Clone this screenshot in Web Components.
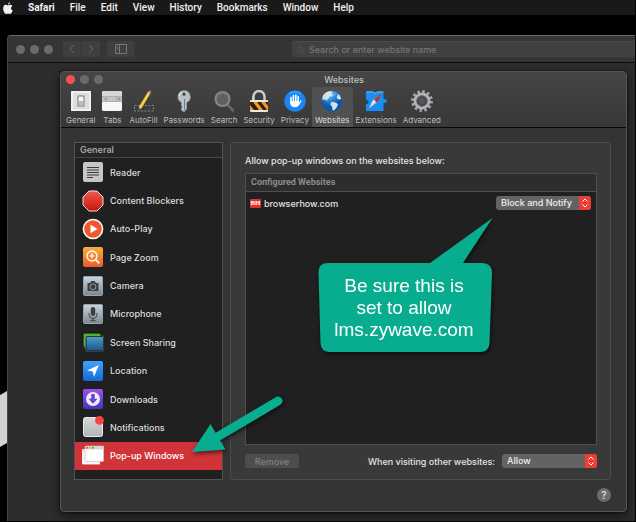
<!DOCTYPE html>
<html lang="en">
<head>
<meta charset="utf-8">
<title>Websites</title>
<style>
  html, body { margin: 0; height: 100%; }
  body { background: #000; font-family: Inter, "Liberation Sans", sans-serif; font-size: 9px; color: #e4e4e4; overflow: hidden; }
</style>
</head>
<body>
<mac-desktop>
  <mac-menubar slot="menubar"></mac-menubar>
  <browser-window>
    <settings-dialog></settings-dialog>
  </browser-window>
  <pointer-arrow slot="overlay"></pointer-arrow>
  <callout-note slot="overlay">Be sure this is<br>set to allow<br>lms.zywave.com</callout-note>
</mac-desktop>

<script>
const ICONS = {
  general: `<rect x="1" y="1" width="20" height="20" fill="#f0f0f0"/><rect x="3" y="3" width="16" height="16" fill="#dcdfe2"/><rect x="8" y="6" width="6" height="10" fill="#f5f5f5" stroke="#70757b"/><rect x="9" y="11" width="4" height="4" fill="#b9bdc2"/>`,
  tabs: `<rect x="1" y="1" width="20" height="20" rx="1.5" fill="#f7f7f7"/><path d="M1 2.5Q1 1 2.500 1h17Q21 1 21 2.500V6H1z" fill="#dad5d8"/><rect x="1" y="6" width="20" height="6" fill="#c6c1c4"/><path d="M1 6.500h20M1 11.500h20M15.500 6v6" stroke="#a5a1a7" stroke-width=".6"/><path d="M3.500 7.700l2.500 2.500m0-2.500l-2.500 2.500M16.700 9h3M18.200 7.500v3" stroke="#7b787c" stroke-width=".7"/>`,
  autofill: `<rect x="1.500" y="15.500" width="19" height="5.500" fill="none" stroke="#9a9a9a" stroke-width=".8" stroke-dasharray="2 1.500"/><path d="M14.500 2.500l2.600 1.500L9 17.500l-3 2 .4-3.500z" fill="#f6c12c"/><path d="M15.700 3.200L7.500 17" stroke="#ffe37a" stroke-width=".8"/><path d="M17.100 4l-2.600-1.500.8-1.200 2.500 1.500z" fill="#b9bcc2"/><path d="M15.300 1.300q.8-1.300 2.100-.7 1.200.8.400 2.200z" fill="#ee5d8f"/><path d="M6.400 16L9 17.500l-3 2z" fill="#e2c59a"/><path d="M6.200 18.200l1 .6-1.300.8z" fill="#222"/>`,
  passwords: `<path fill="#b9c2c8" stroke="#8e989f" stroke-width=".5" fill-rule="evenodd" d="M11 .5a6.300 6.300 0 0 1 2.700 12V19L11 22l-2.600-2v-2l1-1-1-1v-3.600A6.300 6.300 0 0 1 11 .5zm0 2a1.700 1.700 0 1 0 0 3.400 1.700 1.700 0 0 0 0-3.400z"/><path d="M11.500 9v11" stroke="#707b83"/><path d="M6 6a5 5 0 0 1 3-4" stroke="#e6edf0" fill="none"/>`,
  search: `<path d="M14 14l6 6.500" stroke="#666" stroke-width="2.600" stroke-linecap="round"/><circle cx="9.500" cy="9" r="7" fill="#5f5f5f" stroke="#858585" stroke-width="2.200"/><path d="M5 8a5 5 0 0 1 8-3" stroke="#777" fill="none"/>`,
  security: `<path d="M5.500 11V6.500a5.500 5.500 0 0 1 11 0V11" fill="none" stroke="#c9cdd0" stroke-width="2.400"/><path d="M5 10V6.500" stroke="#f4f4f4" stroke-width=".8"/><rect x="2" y="10" width="18" height="12" rx="1" fill="#e7e7e7"/><rect x="2" y="12" width="18" height="8" fill="#f39b20"/><path d="M2 12h3l6 8H6L2 15zM9 12h4l6 8h-4zM17 12h3v4z" fill="#2c2018"/>`,
  privacy: `<circle cx="11" cy="11" r="10.700" fill="#1887f4"/><path d="M5 4a9.500 9.500 0 0 1 12 0" stroke="#4db0ff" fill="none"/><path d="M7 7.500v5M9.400 5.500v8M11.800 5v8M14.200 6.500v8" stroke="#fff" stroke-width="1.600" stroke-linecap="round"/><path d="M6.200 11H15v1.500l1.600-2.200q1.200-.4.900.8L15.200 15q-1.500 2.300-4.200 2.300-4 0-4.800-3.800z" fill="#fff"/>`,
  websites: `<defs><radialGradient id="g" cx=".4" cy=".25"><stop stop-color="#55b4f6"/><stop offset="1" stop-color="#0d58aa"/></radialGradient></defs><circle cx="11" cy="11" r="10.500" fill="url(#g)"/><path d="M2 5.500Q5 1.500 9 1.200l2.500.8-1 1.500 1.500 1-1.500 2-2-.3-.5 2-2 1.200.5 1.500-2-1.200-2-.5L2 10.500 1.200 9zM10.500 12l3.500.3 3 1.700-1 3-3 3.500-1.500-.5-.5-3.500-1.800-2zM16 3.500l2.500 1.500 1.700 3.200-1.500 1.500-2.300-.7-.8-2.200 1.200-1.600z" fill="#d0e1e8"/><ellipse cx="10" cy="4" rx="6" ry="3" fill="#fff" opacity=".2"/>`,
  extensions: `<path fill="#198ff3" d="M1 1.500h7.500a2 2 0 0 0 3.500 0H18.500V9h.8a2 2 0 0 1 2.500 2 2 2 0 0 1-2.500 2h-.8v8H1v-7a2.200 2.200 0 0 0 2.700-2A2.200 2.200 0 0 0 1 10z"/><path d="M1.500 2h7a2 2 0 0 0 3.700 0h6" fill="none" stroke="#62bdff"/><path d="M16.500 3.500L8.500 9.500l3 3z" fill="#f0422f"/><path d="M16.500 3.500L11.500 12.500 10 11z" fill="#b72626"/><path d="M4 18L8.500 9.500l3 3z" fill="#f4f6f8"/><path d="M4 18L10 11l1.500 1.500z" fill="#bbc9d4"/>`,
  advanced: `<circle cx="11" cy="11" r="9.400" fill="none" stroke="#a7a9ab" stroke-width="3" stroke-dasharray="2.460 2.460"/><circle cx="11" cy="11" r="6.900" fill="none" stroke="#b2b4b6" stroke-width="3"/><circle cx="11" cy="11" r="5.400" fill="#45474a" stroke="#777" stroke-width=".8"/><circle cx="11" cy="11" r="3" fill="#55585b"/>`,
  reader: `<rect x="1" y="1" width="20" height="20" rx="2" fill="#c6c6c8"/><path d="M5 6.500h12M5 9h12M5 11.500h12M5 14h12M5 16.500h6" stroke="#3a3a3c" stroke-width="1.200"/>`,
  blockers: `<defs><linearGradient id="g" x2="0" y2="1"><stop stop-color="#f25a4a"/><stop offset="1" stop-color="#c4160f"/></linearGradient></defs><path d="M7 1h8l6 6v8l-6 6H7l-6-6V7z" fill="url(#g)" stroke="#e9dedd" stroke-width="1"/>`,
  play: `<circle cx="11" cy="11" r="9.600" fill="#f0592f" stroke="#fff" stroke-width="1.500"/><path d="M8.500 6.800v8.400L15.600 11z" fill="#fff"/>`,
  zoom: `<defs><linearGradient id="g" x2="0" y2="1"><stop stop-color="#f7b13a"/><stop offset="1" stop-color="#ee5a2f"/></linearGradient></defs><rect x="1" y="1" width="20" height="20" rx="2" fill="url(#g)"/><circle cx="10" cy="10" r="5" fill="none" stroke="#fff" stroke-width="1.300"/><path d="M7.500 10h5M10 7.500v5" stroke="#fff" stroke-width="1.200"/><path d="M13.700 13.700l3.600 3.600" stroke="#fff" stroke-width="1.800"/>`,
  camera: `<defs><linearGradient id="g" x2="0" y2="1"><stop stop-color="#c8d6dd"/><stop offset="1" stop-color="#7f878b"/></linearGradient></defs><rect x="1.500" y="1.500" width="19" height="19" rx="1" fill="url(#g)" stroke="#8fa4b6"/><path d="M5.500 8h2.700l1-2h3.600l1 2h2.700v8h-11z" fill="#3c4043"/><circle cx="11" cy="11.800" r="2.900" fill="#353a3d" stroke="#a9b0b4" stroke-width=".8"/>`,
  microphone: `<defs><linearGradient id="g" x2="0" y2="1"><stop stop-color="#c8d6dd"/><stop offset="1" stop-color="#7f878b"/></linearGradient></defs><rect x="1.500" y="1.500" width="19" height="19" rx="1" fill="url(#g)" stroke="#8fa4b6"/><rect x="8.800" y="4" width="4.400" height="9" rx="2.200" fill="#3c4043"/><path d="M7 10v1.500a4 4 0 0 0 8 0V10M11 15.500V18M8.500 17.700h5" stroke="#3c4043" fill="none"/>`,
  sharing: `<defs><linearGradient id="g" x2="0" y2="1"><stop stop-color="#48a4bb"/><stop offset="1" stop-color="#1c5298"/></linearGradient></defs><rect x="1" y="2" width="18" height="14" rx="1" fill="#4fae2c" stroke="#111"/><path d="M1.500 16.300h17" stroke="#888" stroke-width=".6"/><rect x="4" y="5.500" width="17.500" height="14" rx="1" fill="url(#g)" stroke="#101418"/><rect x="3.500" y="5" width="18.500" height="15" rx="1.500" fill="none" stroke="#8b9298" stroke-width=".5"/>`,
  location: `<defs><linearGradient id="g" x2="0" y2="1"><stop stop-color="#3fa4fa"/><stop offset="1" stop-color="#1467de"/></linearGradient></defs><rect x="1" y="1" width="20" height="20" rx="2" fill="url(#g)"/><path d="M16.800 5L12 17l-1.300-5.500L5 10.500z" fill="#fff"/>`,
  downloads: `<defs><linearGradient id="g" x2="0" y2="1"><stop stop-color="#a24df0"/><stop offset="1" stop-color="#3f36b9"/></linearGradient></defs><rect x="1" y="1" width="20" height="20" rx="2" fill="url(#g)"/><circle cx="11" cy="11" r="7" fill="#efeaf9"/><path d="M9.300 6h3.400v4.800h2.800L11 15.800l-4.500-5h2.800z" fill="#6540cb"/>`,
  notifications: `<defs><linearGradient id="g" x2="0" y2="1"><stop stop-color="#d5d7da"/><stop offset="1" stop-color="#b1b3b6"/></linearGradient></defs><rect x="1.500" y="1.500" width="19" height="19" rx="2" fill="url(#g)" stroke="#e9e9ea"/><circle cx="17.500" cy="4.400" r="4.400" fill="#f24540"/>`,
  popup: `<rect x="0" y="4" width="18" height="15.500" rx="1" fill="#e8e2e2"/><rect x=".5" y="6.500" width="17" height="12.500" fill="#f7f7f7"/><rect x="3" y="1" width="18.700" height="15.500" rx="1" fill="#fff" stroke="#c7b5b5" stroke-width=".6"/><rect x="3" y="1" width="18.700" height="3.500" rx="1" fill="#d9d4d4"/><circle cx="5" cy="2.800" r="1" fill="#ef5148"/><circle cx="8" cy="2.800" r="1" fill="#e9a52e"/><circle cx="11" cy="2.800" r="1" fill="#43a541"/>`
};
const icon = (name, size = 22) => `<svg width="${size}" height="${size}" viewBox="0 0 22 22" aria-hidden="true">${ICONS[name]}</svg>`;

const RESET = `
  *, ::before, ::after { box-sizing: border-box; }
  button, select, input { font: inherit; color: inherit; border: 0; padding: 0; margin: 0; background: none; appearance: none; white-space: nowrap; }
  svg { display: block; flex: none; }
`;
function define(tag, css, html) {
  customElements.define(tag, class extends HTMLElement {
    connectedCallback() {
      if (this.shadowRoot) return;
      const body = typeof html === "function" ? html(this) : html;
      this.attachShadow({ mode: "open" }).innerHTML = `<style>${RESET}${css}</style>${body}`;
    }
  });
}

define("mac-desktop", `
  :host { display: flex; flex-direction: column; position: relative; min-height: 100vh; padding: 0 1px 1px 0; box-sizing: border-box; overflow: hidden; }
  main { flex: 1; display: flex; margin-top: 20px; }
  .edge { flex: none; width: 7px; display: flex; flex-direction: column; justify-content: flex-end; padding-bottom: 72px; }
`, `<slot name="menubar"></slot>
<main><div class="edge"><svg width="7" height="58" viewBox="0 0 7 58"><path d="M0 4L7 0V52L0 56z" fill="#d2d2d2"/></svg></div><slot></slot></main>
<slot name="overlay"></slot>`);

define("mac-menubar", `
  :host { display: block; background: #191919; color: #f0f0f0; font: 500 10px Roboto, sans-serif; }
  nav { display: flex; align-items: center; gap: 15px; height: 15px; padding-left: 3px; }
  .app { font-weight: 700; }
`, `<nav aria-label="Menu bar">
  <button aria-label="Apple"><svg width="10" height="12" viewBox="0 0 10 12"><path fill="#f2f2f2" d="M7 0Q7 2 5 2.700 4.800 1 7 0zM5 3.400Q6 2.800 7 2.800q1.600 0 2.400 1.200Q8 5 8 6.300q0 1.500 1.700 2.300Q8.500 12 7 12q-.9-.5-1.900-.5T3.200 12Q1.500 12 .6 9-.7 4.500 1.600 3.100 2.700 2.500 3.900 3z"/></svg></button>
  <button class="app">Safari</button><button>File</button><button>Edit</button><button>View</button><button>History</button><button>Bookmarks</button><button>Window</button><button>Help</button>
</nav>`);

define("traffic-lights", `
  :host { display: flex; gap: 5px; }
  button { width: 9px; height: 9px; border-radius: 50%; background: #6b6b6b; }
  button:first-of-type { background: var(--close, #6b6b6b); }
`, `<button aria-label="Close"></button><button aria-label="Minimize"></button><button aria-label="Zoom"></button>`);

define("browser-window", `
  :host { flex: 1; min-width: 0; display: flex; flex-direction: column; background: #2d2d2d; border: 1px solid #484848; border-top-color: #686868; border-right: 0; border-bottom: 0; border-top-left-radius: 4px; }
  header { display: grid; grid-template-columns: 284px 1fr; align-items: center; height: 27px; background: #353535; border-bottom: 1px solid #0c0c0c; border-top-left-radius: 4px; }
  .controls { display: flex; align-items: center; padding-left: 8px; }
  .controls button { display: grid; place-items: center; height: 16px; width: 18px; margin-right: 1px; background: #3f3f3f; border-radius: 3px; }
  .controls button:first-of-type { margin-left: 10px; }
  .controls button.side { width: 27px; margin-left: 6px; }
  label { display: flex; align-items: center; gap: 4px; height: 16px; padding-left: 5px; background: #414141; border-radius: 3px 0 0 3px; border-top: 1px solid #4b4b4b; }
  input { flex: 1; min-width: 0; }
  input::placeholder { color: #7b7b7b; opacity: 1; }
  .content { flex: 1; display: flex; padding: 8px 8px 9px 52px; }
`, `<header>
  <div class="controls"><traffic-lights></traffic-lights>
    <button aria-label="Back"><svg width="8" height="10"><path d="M6 1L2 5l4 4" fill="none" stroke="#666"/></svg></button>
    <button aria-label="Forward"><svg width="8" height="10"><path d="M2 1l4 4-4 4" fill="none" stroke="#666"/></svg></button>
    <button class="side" aria-label="Sidebar"><svg width="12" height="10"><path d="M.5.500h11v9H.500zM4.500.500v9M1.500 3h2M1.500 5h2" fill="none" stroke="#777"/></svg></button>
  </div>
  <label><svg width="8" height="8"><circle cx="3.500" cy="3.500" r="2.500" fill="none" stroke="#525252"/><path d="M5.500 5.500l2 2" stroke="#525252"/></svg><input type="search" placeholder="Search or enter website name" aria-label="Address"></label>
</header>
<div class="content"><slot></slot></div>`);

define("toolbar-item", `
  :host { display: block; }
  button { display: flex; flex-direction: column; align-items: center; gap: 2px; height: 40px; padding: 3px 3px 0; font-size: 8px; line-height: 12px; color: #bebebe; border-radius: 3px 3px 0 0; }
  :host([selected]) button { background: #515151; color: #dcdcdc; }
`, el => `<button ${el.hasAttribute("selected") ? 'aria-current="page"' : ""}>${icon(el.getAttribute("icon"))}<slot></slot></button>`);

define("sidebar-item", `
  :host { display: flex; }
  button { flex: 1; display: flex; align-items: center; gap: 6px; padding-left: 7px; font-weight: 500; color: #dcdcdc; text-align: left; }
  :host([selected]) button { background: #d03338; color: #fff; }
`, el => `<button>${icon(el.getAttribute("icon"))}<slot></slot></button>`);

define("popup-select", `
  :host { display: grid; width: 95px; height: 14px; background: #636363; border-radius: 3px; overflow: hidden; font-weight: 500; color: #f0f0f0; }
  select, svg { grid-area: 1 / 1; }
  select { width: 100%; padding: 0 13px 0 5px; line-height: 14px; outline: 0; }
  svg { justify-self: end; pointer-events: none; }
`, el => `<select aria-label="${el.getAttribute("label")}">${el.getAttribute("options").split("|").map(o => `<option>${o}</option>`).join("")}</select>
<svg width="12" height="14"><rect width="12" height="14" fill="#ee3f35"/><path d="M3.500 5.500L6 3l2.500 2.500M3.500 8.500L6 11l2.500-2.500" fill="none" stroke="#fff"/></svg>`);

define("settings-dialog", `
  :host { flex: 1; min-width: 0; display: flex; flex-direction: column; background: #343434; border: 1px solid #565656; border-radius: 4px; box-shadow: 0 0 2px #000, 0 4px 12px #0009; overflow: hidden; }
  header { background: linear-gradient(#454545, #383838); border-bottom: 1px solid #080808; }
  .title { display: grid; grid-template-columns: 1fr auto 1fr; align-items: center; height: 15px; padding: 0 4px 0 5px; }
  h1 { margin: 0; font-size: 9px; line-height: 15px; font-weight: 500; color: #c0c0c0; }
  nav { display: flex; padding-left: 2px; }
  .panes { flex: 1; display: flex; gap: 7px; padding: 14px 15px 0 13px; }
  aside { flex: none; width: 149px; display: flex; flex-direction: column; background: #202020; border: 1px solid #535353; }
  h2 { margin: 0; padding-left: 5px; font-size: 9px; line-height: 14px; font-weight: 600; color: #a4a4a4; background: #262626; border-bottom: 1px solid #464646; }
  .list { flex: 1; display: grid; grid-auto-rows: 1fr; padding-bottom: 9px; }
  section { flex: 1; min-width: 0; display: flex; flex-direction: column; padding: 12px 13px 11px 14px; background: #393939; border: 1px solid #4b4b4b; border-radius: 3px; }
  p { margin: 0 0 6px; line-height: 12px; font-weight: 500; }
  .sites { flex: 1; background: #202020; border: 1px solid #4e4e4e; margin-bottom: 9px; }
  table { width: 100%; border-collapse: collapse; }
  th { height: 17px; padding: 0 5px; text-align: left; font: 700 9px/15px Roboto, sans-serif; color: #8b8b8b; background: #2d2d2d; border-bottom: 1px solid #4e4e4e; }
  td { height: 24px; padding: 0 5px 0 4px; font-weight: 500; }
  .site { display: flex; align-items: center; gap: 3px; }
  .fav { display: grid; place-items: center; width: 11px; height: 9px; border-radius: 1px; background: #e2322d; color: #fff; font: 700 7px/9px "Liberation Serif", serif; }
  td popup-select { margin-left: auto; }
  .actions { display: flex; align-items: center; gap: 7px; font-weight: 500; }
  .remove { width: 54px; height: 14px; margin-right: auto; background: #4d4d4d; border-radius: 2px; color: #818181; }
  footer { display: flex; justify-content: flex-end; padding: 8px 15px 9px; }
  .help { width: 14px; height: 14px; border-radius: 50%; background: #6b6b6b; font-size: 10px; line-height: 14px; font-weight: 500; }
  traffic-lights { --close: #f5524b; }
`, `<header>
  <div class="title"><traffic-lights></traffic-lights><h1>Websites</h1></div>
  <nav aria-label="Preferences">
    <toolbar-item icon="general">General</toolbar-item><toolbar-item icon="tabs">Tabs</toolbar-item><toolbar-item icon="autofill">AutoFill</toolbar-item><toolbar-item icon="passwords">Passwords</toolbar-item><toolbar-item icon="search">Search</toolbar-item><toolbar-item icon="security">Security</toolbar-item><toolbar-item icon="privacy">Privacy</toolbar-item><toolbar-item icon="websites" selected>Websites</toolbar-item><toolbar-item icon="extensions">Extensions</toolbar-item><toolbar-item icon="advanced">Advanced</toolbar-item>
  </nav>
</header>
<div class="panes">
  <aside><h2>General</h2><div class="list">
    <sidebar-item icon="reader">Reader</sidebar-item>
    <sidebar-item icon="blockers">Content Blockers</sidebar-item>
    <sidebar-item icon="play">Auto-Play</sidebar-item>
    <sidebar-item icon="zoom">Page Zoom</sidebar-item>
    <sidebar-item icon="camera">Camera</sidebar-item>
    <sidebar-item icon="microphone">Microphone</sidebar-item>
    <sidebar-item icon="sharing">Screen Sharing</sidebar-item>
    <sidebar-item icon="location">Location</sidebar-item>
    <sidebar-item icon="downloads">Downloads</sidebar-item>
    <sidebar-item icon="notifications">Notifications</sidebar-item>
    <sidebar-item icon="popup" selected>Pop-up Windows</sidebar-item>
  </div></aside>
  <section>
    <p>Allow pop-up windows on the websites below:</p>
    <div class="sites"><table>
      <thead><tr><th colspan="2">Configured Websites</th></tr></thead>
      <tbody><tr><td><div class="site"><span class="fav">BH</span>browserhow.com</div></td><td><popup-select label="browserhow.com" options="Block and Notify|Block|Allow"></popup-select></td></tr></tbody>
    </table></div>
    <div class="actions"><button class="remove" disabled>Remove</button><span>When visiting other websites:</span><popup-select label="When visiting other websites" options="Allow|Block and Notify|Block"></popup-select></div>
  </section>
</div>
<footer><button class="help" aria-label="Help">?</button></footer>`);

define("pointer-arrow", `
  :host { position: absolute; left: 190px; top: 394px; filter: drop-shadow(1px 2px 2px #0009); }
`, `<svg width="96" height="62" viewBox="190 394 96 62" aria-hidden="true"><path d="M218 436.500L278 401" stroke="#08ad8f" stroke-width="9" stroke-linecap="round"/><path d="M192 452L210.500 424 225.500 449.500z" fill="#08ad8f"/></svg>`);

define("callout-note", `
  :host { position: absolute; left: 318px; top: 218px; width: 175px; height: 135px; display: grid; filter: drop-shadow(1px 2px 2px #0009); }
  svg, div { grid-area: 1 / 1; }
  div { padding: 57px 3px 0 0; text-align: center; font: 19px/22px "Liberation Sans", Arial, sans-serif; color: #fff; }
`, `<svg width="175" height="135" aria-hidden="true"><path d="M10 45H112L174.500 0 145 45H164Q174 45 174 55L171.500 125Q171 134 162 134H12Q3 134 2.500 125L.500 55Q0 45 10 45z" fill="#08ad8f"/></svg><div><slot></slot></div>`);
</script>
</body>
</html>
